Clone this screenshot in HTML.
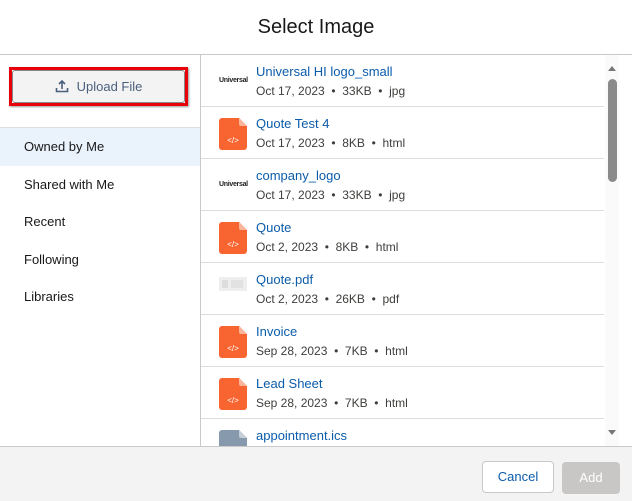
<!DOCTYPE html>
<html><head><style>
*{box-sizing:border-box;margin:0;padding:0}
body{width:632px;height:501px;overflow:hidden;background:#fff;font-family:"Liberation Sans",sans-serif;position:relative;color:#181818}
.hdr{position:absolute;left:0;top:0;width:632px;height:55px;border-bottom:1px solid #c9c9c9;text-align:center;font-size:20px;line-height:55px;color:#181818}
.left{position:absolute;left:0;top:55px;width:201px;height:391px;border-right:1px solid #c9c9c9}
.upbox{position:absolute;left:9px;top:12px;width:179px;height:39px;border:3px solid #e8000b;box-shadow:1px 1px 2px rgba(0,0,0,.4)}
.upbtn{position:absolute;left:0;top:0;right:0;bottom:0;border:1px solid #888;border-radius:3px;background:#f3f3f3;font-size:13px;text-align:center;line-height:31px;color:#4a5f7e}
.sep{position:absolute;left:0;top:72px;width:200px;border-top:1px solid #ddd}
.nav{position:absolute;left:0;width:200px;height:38px;font-size:13px;line-height:38px;padding-left:24px;color:#181818}
.sel{background:#eaf2fb}
.list{position:absolute;left:201px;top:55px;width:404px;height:391px;overflow:hidden}
.row{position:absolute;left:0;width:403px;height:52px;border-bottom:1px solid #ddd}
.nm{position:absolute;left:55px;top:9px;font-size:13px;color:#0b5cab}
.mt{position:absolute;left:55px;top:29px;font-size:12px;color:#3e3e3c;white-space:pre}
.ic{position:absolute;left:18px;top:11px;width:28px;height:32px}
.logo{position:absolute;left:18px;top:22px;font-size:7px;font-weight:bold;color:#222;letter-spacing:-.3px}
.track{position:absolute;left:605px;top:55px;width:14px;height:391px;background:#fafafa}
.thumb{position:absolute;left:608px;top:79px;width:9px;height:103px;background:#8a8a8a;border-radius:5px}
.foot{position:absolute;left:0;top:446px;width:632px;height:55px;background:#f3f3f3;border-top:1px solid #c9c9c9}
.cancel{position:absolute;left:482px;top:14px;width:72px;height:32px;border:1px solid #c9c9c9;border-radius:4px;background:#fff;color:#0b5cab;font-size:13px;text-align:center;line-height:30px}
.add{position:absolute;left:562px;top:15px;width:58px;height:32px;border-radius:4px;background:#c9c7c5;color:#fff;font-size:13px;text-align:center;line-height:32px}
</style></head><body>
<div class="hdr">Select Image</div>
<div class="left">
 <div class="upbox"><div class="upbtn"><svg width="14" height="14" viewBox="0 0 14 14" style="vertical-align:-2px;margin-right:8px"><path d="M7 10V2M4 5l3-3 3 3M1.5 9v3.5h11V9" fill="none" stroke="#4a5f7e" stroke-width="1.6"/></svg>Upload File</div></div>
 <div class="sep"></div>
 <div class="nav sel" style="top:73px">Owned by Me</div>
 <div class="nav" style="top:111px">Shared with Me</div>
 <div class="nav" style="top:148px">Recent</div>
 <div class="nav" style="top:186px">Following</div>
 <div class="nav" style="top:223px">Libraries</div>
</div>
<div class="list">
 <div class="row" style="top:0"><div class="logo">Universal</div><div class="nm">Universal HI logo_small</div><div class="mt">Oct 17, 2023  •  33KB  •  jpg</div></div>
 <div class="row" style="top:52px"><svg class="ic" viewBox="0 0 28 32"><path d="M3 0h17l8 8v21a3 3 0 0 1-3 3H3a3 3 0 0 1-3-3V3a3 3 0 0 1 3-3z" fill="#f96531"/><path d="M20 0l8 8h-6a2 2 0 0 1-2-2z" fill="#fbb49a"/><text x="14" y="25" font-size="8" fill="#fff" text-anchor="middle" font-family="Liberation Sans">&lt;/&gt;</text></svg><div class="nm">Quote Test 4</div><div class="mt">Oct 17, 2023  •  8KB  •  html</div></div>
 <div class="row" style="top:104px"><div class="logo">Universal</div><div class="nm">company_logo</div><div class="mt">Oct 17, 2023  •  33KB  •  jpg</div></div>
 <div class="row" style="top:156px"><svg class="ic" viewBox="0 0 28 32"><path d="M3 0h17l8 8v21a3 3 0 0 1-3 3H3a3 3 0 0 1-3-3V3a3 3 0 0 1 3-3z" fill="#f96531"/><path d="M20 0l8 8h-6a2 2 0 0 1-2-2z" fill="#fbb49a"/><text x="14" y="25" font-size="8" fill="#fff" text-anchor="middle" font-family="Liberation Sans">&lt;/&gt;</text></svg><div class="nm">Quote</div><div class="mt">Oct 2, 2023  •  8KB  •  html</div></div>
 <div class="row" style="top:208px"><svg class="ic" viewBox="0 0 28 32"><rect x="0" y="3" width="28" height="14" fill="#eee"/><rect x="3" y="6" width="6" height="8" fill="#ddd"/><rect x="12" y="6" width="12" height="8" fill="#e2e2e2"/></svg><div class="nm">Quote.pdf</div><div class="mt">Oct 2, 2023  •  26KB  •  pdf</div></div>
 <div class="row" style="top:260px"><svg class="ic" viewBox="0 0 28 32"><path d="M3 0h17l8 8v21a3 3 0 0 1-3 3H3a3 3 0 0 1-3-3V3a3 3 0 0 1 3-3z" fill="#f96531"/><path d="M20 0l8 8h-6a2 2 0 0 1-2-2z" fill="#fbb49a"/><text x="14" y="25" font-size="8" fill="#fff" text-anchor="middle" font-family="Liberation Sans">&lt;/&gt;</text></svg><div class="nm">Invoice</div><div class="mt">Sep 28, 2023  •  7KB  •  html</div></div>
 <div class="row" style="top:312px"><svg class="ic" viewBox="0 0 28 32"><path d="M3 0h17l8 8v21a3 3 0 0 1-3 3H3a3 3 0 0 1-3-3V3a3 3 0 0 1 3-3z" fill="#f96531"/><path d="M20 0l8 8h-6a2 2 0 0 1-2-2z" fill="#fbb49a"/><text x="14" y="25" font-size="8" fill="#fff" text-anchor="middle" font-family="Liberation Sans">&lt;/&gt;</text></svg><div class="nm">Lead Sheet</div><div class="mt">Sep 28, 2023  •  7KB  •  html</div></div>
 <div class="row" style="top:364px;border:0"><svg class="ic" viewBox="0 0 28 32"><path d="M3 0h17l8 8v21a3 3 0 0 1-3 3H3a3 3 0 0 1-3-3V3a3 3 0 0 1 3-3z" fill="#8799ad"/><path d="M20 0l8 8h-6a2 2 0 0 1-2-2z" fill="#c5ced8"/></svg><div class="nm">appointment.ics</div></div>
</div>
<div class="track"></div>
<svg style="position:absolute;left:607px;top:65px" width="10" height="7"><path d="M1 6h8L5 1z" fill="#777"/></svg>
<svg style="position:absolute;left:607px;top:429px" width="10" height="7"><path d="M1 1h8L5 6z" fill="#777"/></svg>
<div class="thumb"></div>
<div class="foot"><div class="cancel">Cancel</div><div class="add">Add</div></div>
</body></html>
